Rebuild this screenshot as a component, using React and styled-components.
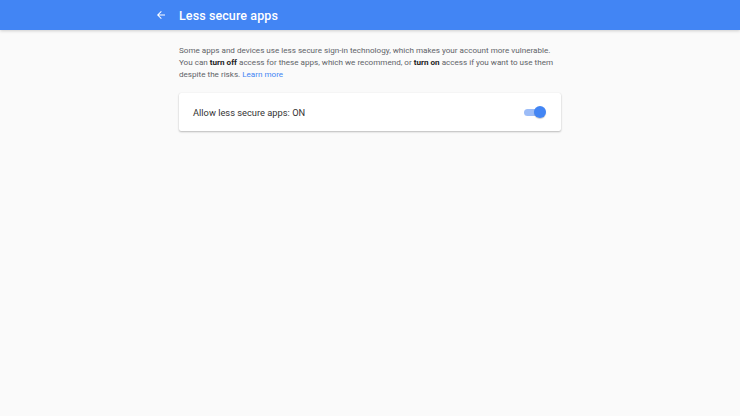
import styled, { createGlobalStyle } from "styled-components";

const GlobalStyle = createGlobalStyle`
  html, body {
    margin: 0;
    padding: 0;
    background: #fafafa;
    font-family: Roboto, "Liberation Sans", Arial, sans-serif;
  }
`;

const Page = styled.div`
  min-height: 416px;
  background: #fafafa;
`;

const Header = styled.header`
  height: 30px;
  background: #4285f4;
  display: flex;
  align-items: center;
  padding-left: 154px;
  box-shadow: 0 1px 3px rgba(0, 0, 0, 0.18);
`;

const BackButton = styled.button`
  width: 14px;
  height: 14px;
  padding: 0;
  margin-right: 11px;
  border: none;
  background: none;
  display: flex;
  align-items: center;
  justify-content: center;
  cursor: pointer;
`;

const Title = styled.h1`
  margin: 0;
  font-size: 12.5px;
  font-weight: 500;
  color: #fff;
  letter-spacing: 0.1px;
`;

const Content = styled.main`
  width: 382px;
  margin: 0 auto;
  padding: 14px 0 0 0;
`;

const Intro = styled.p`
  margin: 0 0 13px 0;
  font-size: 8.1px;
  line-height: 12px;
  color: #5f6368;

  b {
    color: #212121;
    font-weight: 700;
  }

  a {
    color: #4285f4;
    text-decoration: none;
  }
`;

const Card = styled.div`
  height: 38px;
  background: #fff;
  border-radius: 2px;
  box-shadow: 0 1px 2px rgba(0, 0, 0, 0.25), 0 0 1px rgba(0, 0, 0, 0.1);
  display: flex;
  align-items: center;
  justify-content: space-between;
  padding: 0 15px 0 14px;
`;

const Label = styled.span`
  font-size: 9.3px;
  color: #333;
`;

const Toggle = styled.div`
  position: relative;
  width: 22px;
  height: 12px;
  display: flex;
  align-items: center;
`;

const Track = styled.div`
  width: 20px;
  height: 7px;
  border-radius: 4px;
  background: ${(p) => (p.$on ? "#9cbcf7" : "#bdbdbd")};
`;

const Thumb = styled.div`
  position: absolute;
  top: 0;
  left: ${(p) => (p.$on ? "10px" : "0")};
  width: 12px;
  height: 12px;
  border-radius: 50%;
  background: ${(p) => (p.$on ? "#4285f4" : "#f5f5f5")};
  box-shadow: 0 1px 1px rgba(0, 0, 0, 0.2);
`;

export default function App() {
  return (
    <Page>
      <GlobalStyle />
      <Header>
        <BackButton aria-label="Back">
          <svg width="12" height="12" viewBox="0 0 24 24">
            <path
              d="M20 11H7.83l5.59-5.59L12 4l-8 8 8 8 1.41-1.41L7.83 13H20v-2z"
              fill="#fff"
            />
          </svg>
        </BackButton>
        <Title>Less secure apps</Title>
      </Header>
      <Content>
        <Intro>
          Some apps and devices use less secure sign-in technology, which makes
          your account more vulnerable. You can <b>turn off</b> access for these
          apps, which we recommend, or <b>turn on</b> access if you want to use
          them despite the risks. <a href="#">Learn more</a>
        </Intro>
        <Card>
          <Label>Allow less secure apps: ON</Label>
          <Toggle>
            <Track $on />
            <Thumb $on />
          </Toggle>
        </Card>
      </Content>
    </Page>
  );
}
